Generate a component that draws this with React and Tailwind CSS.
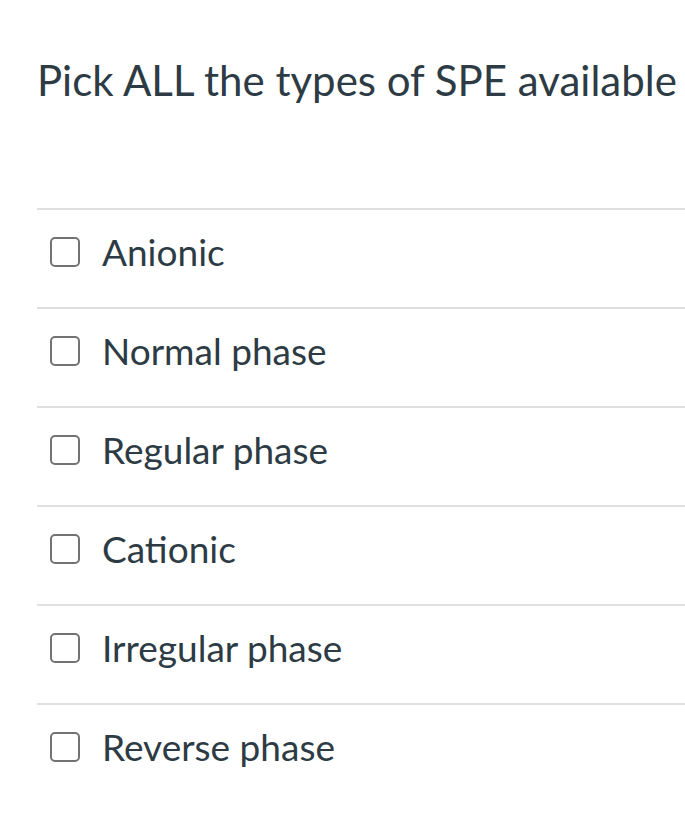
const options = [
  "Anionic",
  "Normal phase",
  "Regular phase",
  "Cationic",
  "Irregular phase",
  "Reverse phase",
];

const Checkbox = () => (
  <span className="block h-[30px] w-[30px] shrink-0 rounded-[5px] border-2 border-[#737373] bg-white" />
);

export default function App() {
  return (
    <div className="min-h-[829px] bg-white pl-[37px] font-['Lato',sans-serif] text-[#2d3b45]">
      <h1 className="whitespace-nowrap pt-[52px] text-[42px] leading-[56px] font-normal">
        Pick ALL the types of SPE available
      </h1>
      <div className="mt-[100px]">
        {options.map((label) => (
          <label
            key={label}
            className="flex h-[99px] items-center gap-[22px] border-t-2 border-[#e0e0e0] pb-[14px] pl-[13px]"
          >
            <Checkbox />
            <span className="whitespace-nowrap text-[37px] leading-none">{label}</span>
          </label>
        ))}
      </div>
    </div>
  );
}
